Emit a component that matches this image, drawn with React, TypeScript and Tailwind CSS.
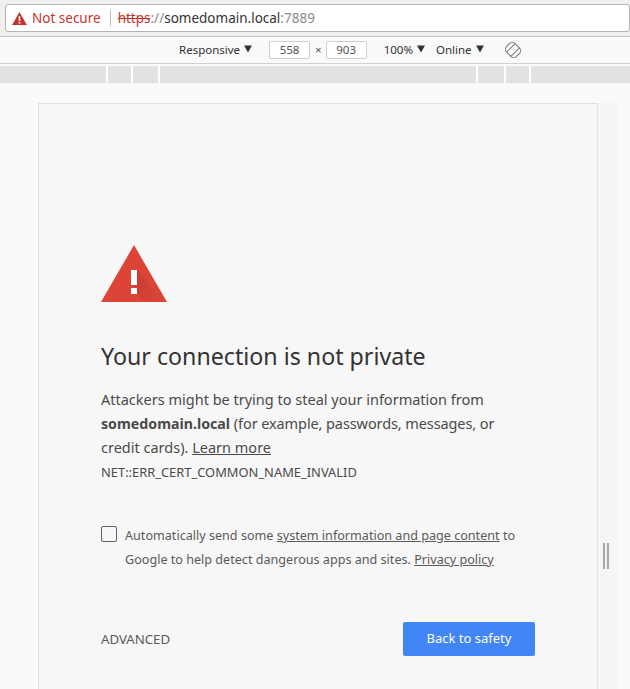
function Caret() {
  return (
    <svg width="8" height="8" viewBox="0 0 9 8" className="ml-[4px] -mt-[3px]">
      <polygon points="0,0 9,0 4.5,8" fill="#333" />
    </svg>
  )
}

function NumBox({ value }: { value: string }) {
  return (
    <div className="w-[41px] h-[18px] flex items-center justify-center bg-white border border-[#cfcfcf] rounded-[2px] text-[11.5px] text-[#555]">
      {value}
    </div>
  )
}

function RulerSegments() {
  const widths = [106, 23, 25, 316, 26, 23]
  return (
    <div className="h-[17px] mt-[2px] flex gap-[2px] bg-white">
      {widths.map((w, i) => (
        <div key={i} className="h-full bg-[#e2e2e2]" style={{ width: w }} />
      ))}
      <div className="h-full flex-1 bg-[#e2e2e2]" />
    </div>
  )
}

function App() {
  return (
    <div className='w-[630px] h-[689px] overflow-hidden bg-[#fafafa] font-["Noto_Sans","Open_Sans",sans-serif]'>
      <div className="h-[37px] bg-[#f1f0ef] border-b border-[#c4c4c4] pt-[4px] pl-[5px]">
        <div className="h-[28px] bg-white border border-[#b5b5b5] rounded-[3px] flex items-center pl-[6px] text-[13.5px]">
          <svg width="15" height="13" viewBox="0 0 16 14">
            <polygon points="8,0 16,14 0,14" fill="#c5352b" />
            <rect x="7.1" y="4.5" width="1.8" height="5" fill="#fff" />
            <rect x="7.1" y="10.6" width="1.8" height="1.8" fill="#fff" />
          </svg>
          <span className="ml-[5px] text-[#c5352b]">Not secure</span>
          <span className="ml-[9px] w-px h-[16px] bg-[#bdbdbd]" />
          <span className="ml-[7px] text-[#c5352b] line-through">https</span>
          <span className="text-[#8a8a8a]">://</span>
          <span className="text-[#333]">somedomain.local</span>
          <span className="text-[#8a8a8a]">:7889</span>
        </div>
      </div>

      <div className="h-[27px] bg-[#f9f9f9] border-b border-[#d0d0d0] flex items-center pl-[179px] text-[11.5px] text-[#333]">
        <span>Responsive</span>
        <Caret />
        <div className="ml-[17px]"><NumBox value="558" /></div>
        <span className="ml-[5px] mr-[4px] text-[#555]">×</span>
        <NumBox value="903" />
        <span className="ml-[17px]">100%</span>
        <Caret />
        <span className="ml-[11px]">Online</span>
        <Caret />
        <svg width="16" height="16" viewBox="0 0 16 16" className="ml-[21px]" fill="none" stroke="#808080" strokeWidth="1.1">
          <g transform="rotate(-45 8 8)">
            <rect x="2" y="1" width="12" height="14" rx="4" />
            <line x1="2" y1="5" x2="14" y2="5" />
            <line x1="2" y1="11" x2="14" y2="11" />
          </g>
        </svg>
      </div>

      <RulerSegments />

      <div className="flex pl-[38px] pt-[20px]">
        <div className="w-[560px] h-[640px] shrink-0 bg-[#f7f7f7] border border-[#e2e2e2] pl-[62px] pr-[62px] pt-[141px] text-[#4a4a4a]">
          <svg width="66" height="57" viewBox="0 0 66 57" className="block">
            <defs>
              <linearGradient id="shade" x1="0" y1="0" x2="1" y2="1">
                <stop offset="0" stopColor="#a8322a" stopOpacity="0.4" />
                <stop offset="1" stopColor="#a8322a" stopOpacity="0.03" />
              </linearGradient>
            </defs>
            <polygon points="33,0 66,57 0,57" fill="#dc4437" />
            <polygon points="36,25 36,49 44,57 60,57 46,36" fill="url(#shade)" />
            <rect x="30" y="25" width="6" height="15" fill="#fff" />
            <rect x="30" y="43" width="6" height="6" fill="#fff" />
          </svg>

          <h1 className="mt-[39px] text-[23.2px] leading-[30px] text-[#333] font-normal">
            Your connection is not private
          </h1>

          <p className="mt-[16px] w-[420px] text-[14.5px] leading-[24px]">
            Attackers might be trying to steal your information from{' '}
            <b className="font-bold text-[14.2px] leading-none">somedomain.local</b>{' '}
            <span className="tracking-[-0.1px]">(for example, passwords, messages, or</span>{' '}
            credit cards). <span className="underline">Learn more</span>
          </p>
          <div className="mt-[4px] text-[12.9px] leading-[18px] text-[#4a4a4a]">
            NET::ERR_CERT_COMMON_NAME_INVALID
          </div>

          <div className="mt-[43px] flex gap-[8px]">
            <div className="w-[16px] h-[16px] mt-[2px] shrink-0 border border-[#5f6368] rounded-[2px]" />
            <p className="text-[12.6px] leading-[24px] w-[400px] text-[#5a5a5a]">
              Automatically send some <span className="underline">system information and page content</span> to
              Google to help detect dangerous apps and sites.{' '}
              <span className="underline">Privacy policy</span>
            </p>
          </div>

          <div className="mt-[50px] flex items-center justify-between">
            <span className="pt-[1px] text-[13.2px] text-[#5a5a5a]">ADVANCED</span>
            <button className="w-[132px] h-[34px] rounded-[2px] bg-[#4285f4] text-white text-[13px]">
              Back to safety
            </button>
          </div>
        </div>

        <div className="w-[19px] h-[640px] bg-[#f5f5f5] pl-[5px] pt-[440px] flex gap-[2px]">
          <div className="w-[2px] h-[26px] bg-[#a8a8a8]" />
          <div className="w-[2px] h-[26px] bg-[#a8a8a8]" />
        </div>
      </div>
    </div>
  )
}

export default App
